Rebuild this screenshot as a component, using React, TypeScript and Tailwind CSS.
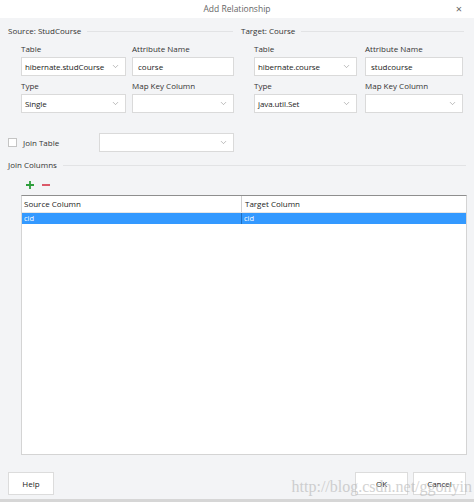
import { ChevronDown } from "lucide-react";

const font = { fontFamily: '"Open Sans", "Noto Sans", sans-serif' };

function Select({ value, className = "" }: { value?: string; className?: string }) {
  return (
    <div
      className={`flex h-[19px] items-center justify-between border border-[#dadada] bg-white pl-[3px] pr-[5px] ${className}`}
    >
      <span className="whitespace-nowrap text-[8px] tracking-[-0.1px] text-[#222]">{value ?? ""}</span>
      <ChevronDown className="h-[9px] w-[9px] shrink-0 text-[#8a8a8a]" strokeWidth={1.5} />
    </div>
  );
}

function Input({ value }: { value: string }) {
  return (
    <div className="flex h-[19px] items-center border border-[#dadada] bg-white px-[5px]">
      <span className="text-[8px] text-[#222]">{value}</span>
    </div>
  );
}

function Header({ title }: { title: string }) {
  return (
    <div className="flex h-[10px] items-center gap-[6px]">
      <span className="whitespace-nowrap text-[8px] leading-[10px] text-[#333]">{title}</span>
      <div className="h-px flex-1 bg-[#e2e3e5]" />
    </div>
  );
}

function Section({
  title,
  table,
  attr,
  type,
  cols,
}: {
  title: string;
  table: string;
  attr: string;
  type: string;
  cols: string;
}) {
  return (
    <div className="flex flex-col">
      <Header title={title} />
      <div className={`mt-[6px] grid pl-[13px] ${cols}`}>
        <span className="h-[13px] text-[8px] leading-[13px] text-[#333]">Table</span>
        <span className="h-[13px] text-[8px] leading-[13px] text-[#333]">Attribute Name</span>
        <div className="mt-[2px]">
          <Select value={table} />
        </div>
        <div className="mt-[2px]">
          <Input value={attr} />
        </div>
        <span className="mt-[3px] h-[13px] text-[8px] leading-[13px] text-[#333]">Type</span>
        <span className="mt-[3px] h-[13px] text-[8px] leading-[13px] text-[#333]">Map Key Column</span>
        <div className="mt-[2px]">
          <Select value={type} />
        </div>
        <div className="mt-[2px]">
          <Select />
        </div>
      </div>
    </div>
  );
}

export default function App() {
  return (
    <div className="relative flex h-[502px] w-[474px] flex-col overflow-hidden bg-[#f3f4f6]" style={font}>
      {/* title bar */}
      <div className="relative flex h-[18px] shrink-0 items-center justify-center bg-white">
        <span className="text-[8.5px] leading-[18px] text-[#666]">Add Relationship</span>
        <span className="absolute right-[12px] top-[2px] text-[11px] leading-[14px] text-[#666]">×</span>
      </div>

      <div className="flex flex-1 flex-col px-[8px]">
        <div className="mt-[8px] grid grid-cols-[225px_223px] gap-x-[8px]">
          <Section
            title="Source: StudCourse"
            table="hibernate.studCourse"
            attr="course"
            type="Single"
            cols="grid-cols-[105px_102px] gap-x-[6px]"
          />
          <Section
            title="Target: Course"
            table="hibernate.course"
            attr="studcourse"
            type="java.util.Set"
            cols="grid-cols-[103px_98px] gap-x-[8px]"
          />
        </div>

        {/* join table */}
        <div className="mt-[20px] flex items-center">
          <div className="h-[9px] w-[9px] border border-[#c4c4c4] bg-white" />
          <span className="ml-[6px] w-[76px] text-[8px] text-[#333]">Join Table</span>
          <Select className="w-[135px]" />
        </div>

        <div className="mt-[8px]">
          <Header title="Join Columns" />
        </div>

        {/* add / remove */}
        <div className="mt-[9px] flex h-[12px] items-center gap-[6px] pl-[17px]">
          <svg width="10" height="10" viewBox="0 0 10 10">
            <path d="M5 1v8M1 5h8" stroke="#2e9e3c" strokeWidth="1.8" />
          </svg>
          <svg width="10" height="10" viewBox="0 0 10 10">
            <path d="M1 5h8" stroke="#d9485a" strokeWidth="1.8" />
          </svg>
        </div>

        {/* columns table */}
        <div className="ml-[13px] mt-[4px] h-[260px] w-[446px] shrink-0 border border-[#d4d4d4] border-t-[#8e8e8e] bg-white">
          <div className="grid h-[17px] grid-cols-[220px_1fr] border-b border-[#e6e6e6] text-[8px] text-[#222]">
            <div className="flex items-center border-r border-[#d0d0d0] pl-[2px]">Source Column</div>
            <div className="flex items-center pl-[3px]">Target Column</div>
          </div>
          <div className="grid h-[11px] grid-cols-[220px_1fr] bg-[#3399ff] text-[7.5px] text-white">
            <div className="flex items-center border-r border-[#1f6fbf] pl-[2px]">cid</div>
            <div className="flex items-center pl-[2px]">cid</div>
          </div>
        </div>

        {/* buttons */}
        <div className="mt-[17px] flex items-center justify-between">
          <button className="h-[23px] w-[46px] border border-[#dcdcdc] bg-white text-[8px] text-[#222]">
            Help
          </button>
          <div className="flex gap-[5px]">
            <button className="h-[23px] w-[53px] border border-[#dcdcdc] bg-white text-[8px] text-[#222]">
              OK
            </button>
            <button className="h-[23px] w-[53px] border border-[#dcdcdc] bg-white text-[8px] text-[#222]">
              Cancel
            </button>
          </div>
        </div>
      </div>

      <div className="h-[3px] shrink-0 bg-[#d6d6d6]" />

      {/* watermark */}
      <span
        className="pointer-events-none absolute bottom-[3px] right-[2px] text-[16px] text-[#b5b5b5] opacity-60"
        style={{ fontFamily: '"Liberation Serif", serif' }}
      >
        http://blog.csdn.net/ggonyin
      </span>
    </div>
  );
}
